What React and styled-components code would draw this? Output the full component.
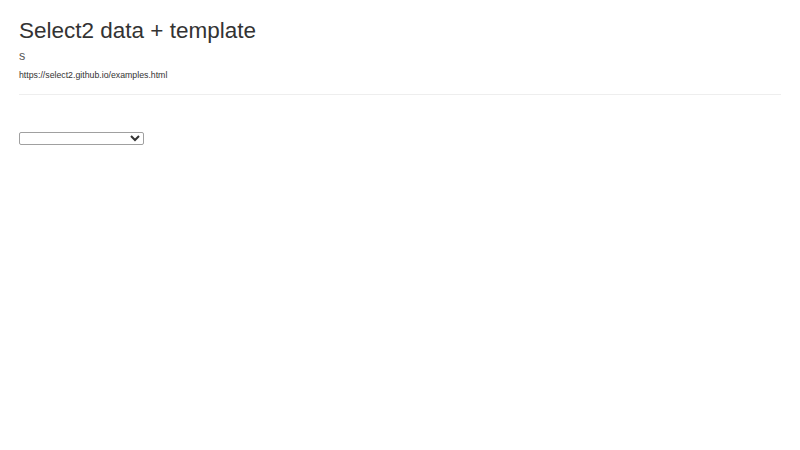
import React from "react";
import styled, { createGlobalStyle } from "styled-components";

const Global = createGlobalStyle`
  html, body { margin: 0; padding: 0; background: #fff; }
  body { font-family: "Liberation Sans", Arial, sans-serif; color: #333; }
`;

const Page = styled.div`
  padding: 16px 19px 0 19px;
  display: flex;
  flex-direction: column;
`;

const Title = styled.h1`
  margin: 0;
  font-size: 22.5px;
  font-weight: 400;
  line-height: 30px;
  color: #333;
`;

const Sub = styled.div`
  margin-top: 3px;
  font-size: 12.5px;
  line-height: 15px;
  color: #555;
`;

const Url = styled.div`
  margin-top: 5px;
  font-size: 8.75px;
  line-height: 12px;
  color: #333;
`;

const Rule = styled.hr`
  margin: 13px 0 0 0;
  border: 0;
  border-top: 1px solid #eee;
`;

const Select = styled.select`
  margin-top: 37px;
  width: 125px;
  height: 13px;
  font-size: 9px;
  padding: 0;
  box-sizing: border-box;
  border: 1px solid #a0a0a0;
  border-radius: 2px;
  background: #fff;
  color: #333;
`;

export default function App() {
  return (
    <>
      <Global />
      <Page>
        <Title>Select2 data + template</Title>
        <Sub>s</Sub>
        <Url>https://select2.github.io/examples.html</Url>
        <Rule />
        <Select />
      </Page>
    </>
  );
}
